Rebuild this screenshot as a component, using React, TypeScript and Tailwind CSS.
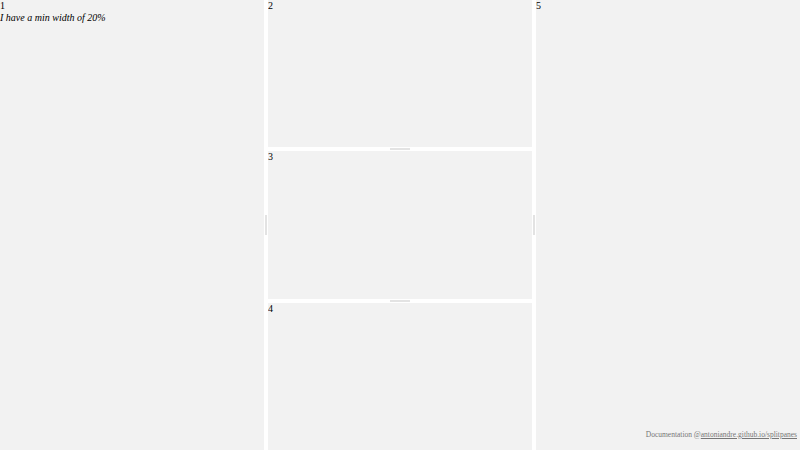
import React from "react";

function Pane({ children, className = "" }: { children?: React.ReactNode; className?: string }) {
  return <div className={`bg-[#f2f2f2] overflow-hidden ${className}`}>{children}</div>;
}

function VSplitter() {
  return (
    <div className="relative w-[4px] shrink-0 bg-white">
      <div className="absolute left-[1px] top-1/2 -translate-y-1/2 h-[20px] w-[2px] border-x border-[#e3e3e3]" />
    </div>
  );
}

function HSplitter() {
  return (
    <div className="relative h-[4px] shrink-0 bg-white">
      <div className="absolute top-[1px] left-1/2 -translate-x-1/2 w-[20px] h-[2px] border-y border-[#e3e3e3]" />
    </div>
  );
}

export default function App() {
  return (
    <div
      className="relative flex h-[450px] w-[800px] overflow-hidden bg-white text-[10px] leading-[11.5px] text-black"
      style={{ fontFamily: '"Liberation Serif", "Times New Roman", serif' }}
    >
      <Pane className="w-[264px] shrink-0">
        <div>1</div>
        <em>I have a min width of 20%</em>
      </Pane>
      <VSplitter />
      <div className="flex w-[264px] shrink-0 flex-col">
        <Pane className="h-[147px] shrink-0">2</Pane>
        <HSplitter />
        <Pane className="h-[148px] shrink-0">3</Pane>
        <HSplitter />
        <Pane className="flex-1">4</Pane>
      </div>
      <VSplitter />
      <Pane className="flex-1">5</Pane>
      <div className="absolute bottom-[10px] right-[3px] text-[7.5px] text-[#777]">
        Documentation @<a className="underline">antoniandre.github.io/splitpanes</a>
      </div>
    </div>
  );
}
